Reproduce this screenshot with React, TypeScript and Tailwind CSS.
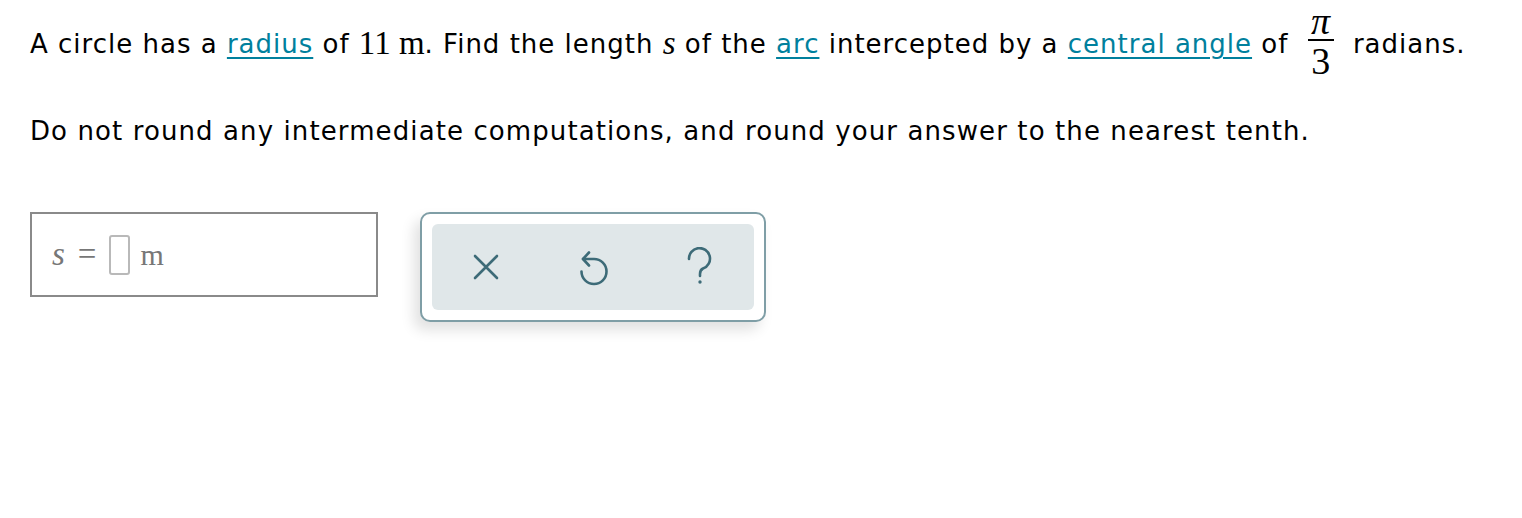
import React from "react";

const sans = { fontFamily: '"DejaVu Sans", Verdana, sans-serif' };

function Link({ children }: { children: React.ReactNode }) {
  return <span className="text-[#00809d] underline underline-offset-[4px] decoration-[2px]">{children}</span>;
}

export default function App() {
  return (
    <div className="w-[1522px] h-[518px] bg-white text-black" style={sans}>
      <div className="pl-[30px] pt-[4px]">
        <div className="flex items-center text-[26px] h-[80px] tracking-[1px]">
          <span className="whitespace-pre">A circle has a </span>
          <Link>radius</Link>
          <span className="whitespace-pre"> of </span>
          <span className="font-['Liberation_Serif'] text-[33px] tracking-normal">11 m</span>
          <span className="whitespace-pre">. Find the length </span>
          <span className="font-['Liberation_Serif'] italic text-[33px] tracking-normal">s</span>
          <span className="whitespace-pre"> of the </span>
          <Link>arc</Link>
          <span className="whitespace-pre"> intercepted by a </span>
          <Link>central angle</Link>
          <span className="whitespace-pre"> of </span>
          <span className="inline-flex flex-col items-center mx-[10px] -mt-[6px] font-['Liberation_Serif'] text-[38px] leading-[32px] tracking-normal">
            <span className="italic">π</span>
            <span className="w-[26px] h-[2px] bg-black mt-[2px] mb-[4px]"></span>
            <span>3</span>
          </span>
          <span className="whitespace-pre"> radians.</span>
        </div>
        <div className="mt-[32px] text-[26px] leading-[30px] tracking-[1.1px]">
          Do not round any intermediate computations, and round your answer to the nearest tenth.
        </div>
        <div className="mt-[66px] flex items-start gap-[42px]">
          <div className="w-[348px] h-[85px] border-2 border-[#8a8a8a] flex items-center pl-[20px] text-[#777] font-['Liberation_Serif'] text-[33px]">
            <span className="italic">s</span>
            <span className="ml-[13px]">=</span>
            <span className="ml-[13px] w-[21px] h-[40px] border-2 border-[#b9b9b9] rounded-[3px]"></span>
            <span className="ml-[10px] text-[30px]">m</span>
          </div>
          <div className="w-[346px] h-[110px] rounded-[10px] border-2 border-[#7f9ea6] bg-white p-[10px] shadow-[-6px_8px_14px_rgba(0,0,0,0.12)]">
            <div className="w-full h-full bg-[#e0e7e9] rounded-[6px] grid grid-cols-3 items-center justify-items-center">
              <svg width="28" height="28" viewBox="0 0 28 28" fill="none" stroke="#3d6b78" strokeWidth="2.6" strokeLinecap="round">
                <path d="M3 3 L25 25 M25 3 L3 25" />
              </svg>
              <svg width="34" height="40" viewBox="0 0 34 40" fill="none" stroke="#3d6b78" strokeWidth="2.6" strokeLinecap="round" strokeLinejoin="round">
                <path d="M7 12 L18 12 A12.5 12.5 0 1 1 5.5 24.5" />
                <path d="M13 5.5 L7 12 L13 18.5" />
              </svg>
              <svg width="28" height="40" viewBox="0 0 28 40" fill="none" stroke="#3d6b78" strokeWidth="2.6" strokeLinecap="round">
                <path d="M3 12 A10.5 10.5 0 1 1 17 21.5 Q14 23 14 27 L14 29" />
                <circle cx="14" cy="35" r="1.7" fill="#3d6b78" stroke="none" />
              </svg>
            </div>
          </div>
        </div>
      </div>
    </div>
  );
}
